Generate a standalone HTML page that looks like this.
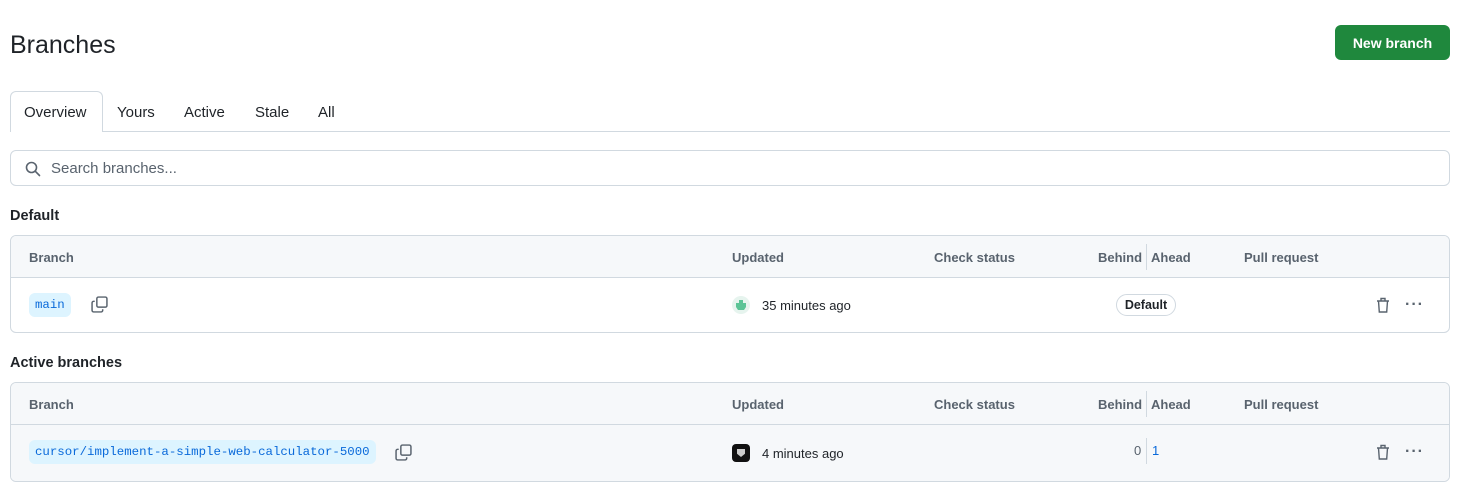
<!DOCTYPE html><html><head><style>
body{margin:0;background:#fff;font-family:"Liberation Sans",sans-serif;color:#1f2328;width:1462px;height:470px;overflow:hidden;position:relative}
.a{position:absolute}
h1{position:absolute;left:10px;top:31px;margin:0;font-size:25px;font-weight:400}
.btn{left:1335px;top:25px;width:115px;height:35px;background:#1f883d;border-radius:6px;color:#fff;font-weight:700;font-size:14px;line-height:36px;text-align:center;box-sizing:border-box}
.tabline{left:10px;top:131px;width:1440px;height:1px;background:#d1d9e0}
.tabsel{left:10px;top:91px;width:93px;height:41px;border:1px solid #d1d9e0;border-bottom:none;border-radius:6px 6px 0 0;background:#fff;box-sizing:border-box}
.tab{top:104px;font-size:15px}
.search{left:10px;top:150px;width:1440px;height:36px;border:1px solid #d1d9e0;border-radius:6px;box-sizing:border-box}
.h2{font-size:14.5px;font-weight:700}
.tbl{left:10px;width:1440px;border:1px solid #d1d9e0;border-radius:6px;box-sizing:border-box;overflow:hidden}
.hd{position:absolute;left:0;top:0;width:100%;height:41px;background:#f6f8fa;border-bottom:1px solid #d1d9e0}
.th{position:absolute;top:14px;font-size:13px;font-weight:700;color:#59636e}
.br{position:absolute;font-family:"Liberation Mono",monospace;font-size:12.4px;color:#0969da;background:#ddf4ff;border-radius:6px;padding:0 6px;height:24px;line-height:24px}
.td{position:absolute;font-size:13px}
.div{position:absolute;width:1px;background:#d1d9e0}
</style></head><body>
<h1>Branches</h1>
<div class="a btn">New branch</div>
<div class="a tabline"></div>
<div class="a tabsel"></div>
<div class="a tab" style="left:24px">Overview</div>
<div class="a tab" style="left:117px">Yours</div>
<div class="a tab" style="left:184px">Active</div>
<div class="a tab" style="left:255px">Stale</div>
<div class="a tab" style="left:318px">All</div>
<div class="a search"><svg class="a" style="left:14px;top:10px" width="16" height="16" viewBox="0 0 16 16"><circle cx="6.5" cy="6.5" r="5" fill="none" stroke="#59636e" stroke-width="1.6"/><path d="M10.2 10.2L14.5 14.5" stroke="#59636e" stroke-width="1.6" stroke-linecap="round"/></svg><div class="a" style="left:40px;top:9px;font-size:15px;color:#59636e">Search branches...</div></div>
<div class="a h2" style="left:10px;top:208px">Default</div>
<div class="a tbl" style="top:235px;height:98px">
<div class="hd"></div>
<div class="th" style="left:18px">Branch</div><div class="th" style="left:721px">Updated</div><div class="th" style="left:923px">Check status</div><div class="th" style="left:1087px">Behind</div><div class="div" style="left:1135px;top:8px;height:26px"></div><div class="th" style="left:1140px">Ahead</div><div class="th" style="left:1233px">Pull request</div>
<div class="br" style="left:18px;top:57px">main</div>
<svg class="a" style="left:80px;top:60px" width="17" height="17" viewBox="0 0 16 16" fill="none" stroke="#59636e" stroke-width="1.4"><rect x="5.5" y="1" width="9.5" height="9.5" rx="1.5"/><path d="M3.5 5H2.5A1.5 1.5 0 0 0 1 6.5v7A1.5 1.5 0 0 0 2.5 15h7a1.5 1.5 0 0 0 1.5-1.5v-1"/></svg>
<div class="a" style="left:721px;top:60px;width:18px;height:18px;border-radius:50%;background:#e6f4ee"><div class="a" style="left:4px;top:4px;width:10px;height:10px;background:#5bc496;clip-path:polygon(30% 0,70% 0,70% 30%,100% 30%,100% 70%,80% 100%,20% 100%,0 70%,0 30%,30% 30%)"></div></div>
<div class="td" style="left:751px;top:62px">35 minutes ago</div>
<div class="a" style="left:1105px;top:58px;width:60px;height:22px;border:1px solid #d1d9e0;border-radius:12px;box-sizing:border-box;font-size:12.5px;font-weight:700;text-align:center;line-height:20px">Default</div>
<svg class="a" style="left:1364px;top:60px" width="16" height="18" viewBox="0 0 16 18" fill="none" stroke="#59636e" stroke-width="1.4"><path d="M2 5h12M6 5V2.5h4V5M3.5 5l.8 11h7.4l.8-11"/></svg>
<div class="a" style="left:1394px;top:60px;font-size:16px;color:#59636e;letter-spacing:1px;font-weight:700">···</div>
</div>
<div class="a h2" style="left:10px;top:355px">Active branches</div>
<div class="a tbl" style="top:382px;height:100px">
<div class="hd"></div>
<div class="a" style="left:0;top:42px;width:100%;height:60px;background:#f6f8fa"></div>
<div class="th" style="left:18px">Branch</div><div class="th" style="left:721px">Updated</div><div class="th" style="left:923px">Check status</div><div class="th" style="left:1087px">Behind</div><div class="div" style="left:1135px;top:8px;height:26px"></div><div class="th" style="left:1140px">Ahead</div><div class="th" style="left:1233px">Pull request</div>
<div class="br" style="left:18px;top:57px">cursor/implement-a-simple-web-calculator-5000</div>
<svg class="a" style="left:384px;top:61px" width="17" height="17" viewBox="0 0 16 16" fill="none" stroke="#59636e" stroke-width="1.4"><rect x="5.5" y="1" width="9.5" height="9.5" rx="1.5"/><path d="M3.5 5H2.5A1.5 1.5 0 0 0 1 6.5v7A1.5 1.5 0 0 0 2.5 15h7a1.5 1.5 0 0 0 1.5-1.5v-1"/></svg>
<div class="a" style="left:721px;top:61px;width:18px;height:18px;border-radius:4px;background:#111"><div class="a" style="left:5px;top:5px;width:8px;height:8px;background:#ccc;clip-path:polygon(0 0,100% 0,100% 60%,50% 100%,0 60%)"></div></div>
<div class="td" style="left:751px;top:63px">4 minutes ago</div>
<div class="td" style="left:1123px;top:60px;color:#59636e">0</div>
<div class="div" style="left:1135px;top:55px;height:26px"></div>
<div class="td" style="left:1141px;top:60px;color:#0969da">1</div>
<svg class="a" style="left:1364px;top:60px" width="16" height="18" viewBox="0 0 16 18" fill="none" stroke="#59636e" stroke-width="1.4"><path d="M2 5h12M6 5V2.5h4V5M3.5 5l.8 11h7.4l.8-11"/></svg>
<div class="a" style="left:1394px;top:60px;font-size:16px;color:#59636e;letter-spacing:1px;font-weight:700">···</div>
</div>
</body></html>
